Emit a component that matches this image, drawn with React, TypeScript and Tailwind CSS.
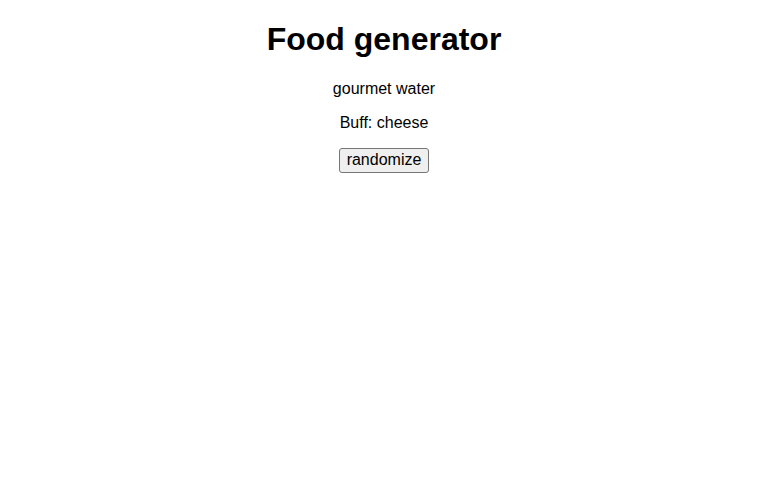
import React, { useState } from "react";

const foods = ["gourmet water", "pizza", "sushi", "tacos", "ramen"];
const buffs = ["cheese", "bacon", "extra spice", "avocado"];

export default function App() {
  const [food, setFood] = useState(0);
  const [buff, setBuff] = useState(0);

  const randomize = () => {
    setFood(Math.floor(Math.random() * foods.length));
    setBuff(Math.floor(Math.random() * buffs.length));
  };

  return (
    <div className="text-center text-black bg-white min-h-screen font-['Liberation_Sans',Arial,sans-serif] text-[16px]">
      <h1 className="text-[32px] leading-[36.8px] font-bold pt-[21.44px] mb-[21.44px]">Food generator</h1>
      <p className="leading-[18.4px] mb-4">{foods[food]}</p>
      <p className="leading-[18.4px] mb-4">Buff: {buffs[buff]}</p>
      <div>
        <button
          onClick={randomize}
          className="bg-[#efefef] border border-[#767676] rounded-[3px] px-[7px] py-[2px] leading-[18.4px] text-[16px] text-black"
        >
          randomize
        </button>
      </div>
    </div>
  );
}
